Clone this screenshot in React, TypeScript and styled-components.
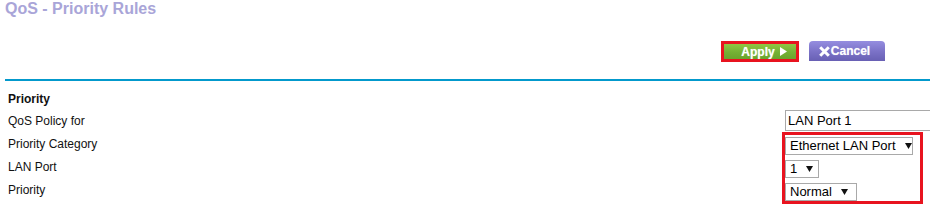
import React from "react";
import styled, { createGlobalStyle } from "styled-components";

const Global = createGlobalStyle`
  html, body { margin: 0; padding: 0; background: #fff; overflow: hidden; }
  body { font-family: "Liberation Sans", Arial, sans-serif; }
`;

const Page = styled.div`
  width: 930px;
  height: 207px;
  overflow: hidden;
`;

const Title = styled.h1`
  margin: 0;
  padding-left: 5px;
  height: 18px;
  line-height: 18px;
  font-size: 16px;
  font-weight: bold;
  color: #a9a5d8;
`;

const ButtonBar = styled.div`
  display: flex;
  justify-content: flex-end;
  align-items: flex-start;
  gap: 10px;
  margin-top: 23px;
  padding-right: 45px;
`;

const Highlight = styled.div<{ $w?: number }>`
  border: 3px solid #e8131f;
  box-sizing: border-box;
  ${(p) => (p.$w ? `width: ${p.$w}px;` : "")}
`;

const Btn = styled.button<{ $variant: "apply" | "cancel" }>`
  display: flex;
  align-items: center;
  justify-content: center;
  gap: 5px;
  box-sizing: border-box;
  border: none;
  margin: 0;
  padding: 0;
  font-family: "Liberation Sans", Arial, sans-serif;
  font-size: 12px;
  font-weight: bold;
  color: #fff;
  text-shadow: 0 0 1px rgba(255, 255, 255, 0.6);
  cursor: pointer;
  ${(p) =>
    p.$variant === "apply"
      ? `
    width: 72px;
    height: 15px;
    background: linear-gradient(#8fc743, #74b134 55%, #6aa42c);
    padding-left: 8px;
  `
      : `
    width: 76px;
    height: 20px;
    border-radius: 4px 4px 0 0;
    background: linear-gradient(#958de0, #7a71c6 55%, #6860b4);
    gap: 1px;
    padding-right: 5px;
  `}
`;

const Divider = styled.div`
  margin: 17px 0 0 5px;
  height: 2px;
  background: #0399cc;
`;

const Form = styled.div`
  display: grid;
  grid-template-columns: 777px 1fr;
  margin-top: 8px;
  padding-left: 8px;
`;

const Labels = styled.div`
  display: flex;
  flex-direction: column;
`;

const Label = styled.div<{ $heading?: boolean }>`
  font-size: 12px;
  color: #111;
  line-height: ${(p) => (p.$heading ? "21px" : "23px")};
  font-weight: ${(p) => (p.$heading ? "bold" : "normal")};
`;

const Controls = styled.div`
  display: flex;
  flex-direction: column;
  align-items: flex-start;
  padding-top: 21px;
`;

const TextInput = styled.input`
  box-sizing: border-box;
  width: 200px;
  height: 21px;
  margin: 0;
  padding: 0 2px;
  border: 1px solid #a9a9a9;
  font-family: "Liberation Sans", Arial, sans-serif;
  font-size: 13px;
  color: #000;
  outline: none;
`;

const SelectGroup = styled.div`
  display: flex;
  flex-direction: column;
  align-items: flex-start;
  gap: 5px;
  margin: 1px 0 0 -3px;
  box-sizing: border-box;
  width: 141px;
  height: 72px;
  border: 3px solid #e8131f;
  padding-top: 2px;
`;

const FakeSelect = styled.div<{ $w: number }>`
  box-sizing: border-box;
  width: ${(p) => p.$w}px;
  height: 18px;
  border: 1px solid #a9a9a9;
  background: #fff;
  display: flex;
  align-items: center;
  justify-content: flex-start;
  gap: 9px;
  padding: 0 2px 0 4px;
  font-size: 13px;
  color: #000;
  line-height: 16px;
  white-space: nowrap;
  overflow: hidden;
  cursor: default;
`;

const Arrow = () => (
  <svg width="7" height="6" viewBox="0 0 7 6" style={{ flex: "none" }}>
    <polygon points="0,0 7,0 3.5,6" fill="#111" />
  </svg>
);

const Select = ({ w, value }: { w: number; value: string }) => (
  <FakeSelect $w={w} role="combobox">
    <span>{value}</span>
    <Arrow />
  </FakeSelect>
);

export default function App() {
  return (
    <Page>
      <Global />
      <Title>QoS - Priority Rules</Title>
      <ButtonBar>
        <Highlight $w={78}>
          <Btn $variant="apply">
            Apply
            <svg width="7" height="9" viewBox="0 0 7 9">
              <polygon points="0,0 7,4.5 0,9" fill="#fff" />
            </svg>
          </Btn>
        </Highlight>
        <Btn $variant="cancel">
          <svg width="11" height="11" viewBox="0 0 11 11">
            <path d="M1.2 1.2 L9.8 9.8 M9.8 1.2 L1.2 9.8" stroke="#fff" strokeWidth="3" />
          </svg>
          Cancel
        </Btn>
      </ButtonBar>
      <Divider />
      <Form>
        <Labels>
          <Label $heading>Priority</Label>
          <Label>QoS Policy for</Label>
          <Label>Priority Category</Label>
          <Label>LAN Port</Label>
          <Label>Priority</Label>
        </Labels>
        <Controls>
          <TextInput defaultValue="LAN Port 1" readOnly />
          <SelectGroup>
            <Select w={128} value="Ethernet LAN Port" />
            <Select w={34} value="1" />
            <Select w={72} value="Normal" />
          </SelectGroup>
        </Controls>
      </Form>
    </Page>
  );
}
